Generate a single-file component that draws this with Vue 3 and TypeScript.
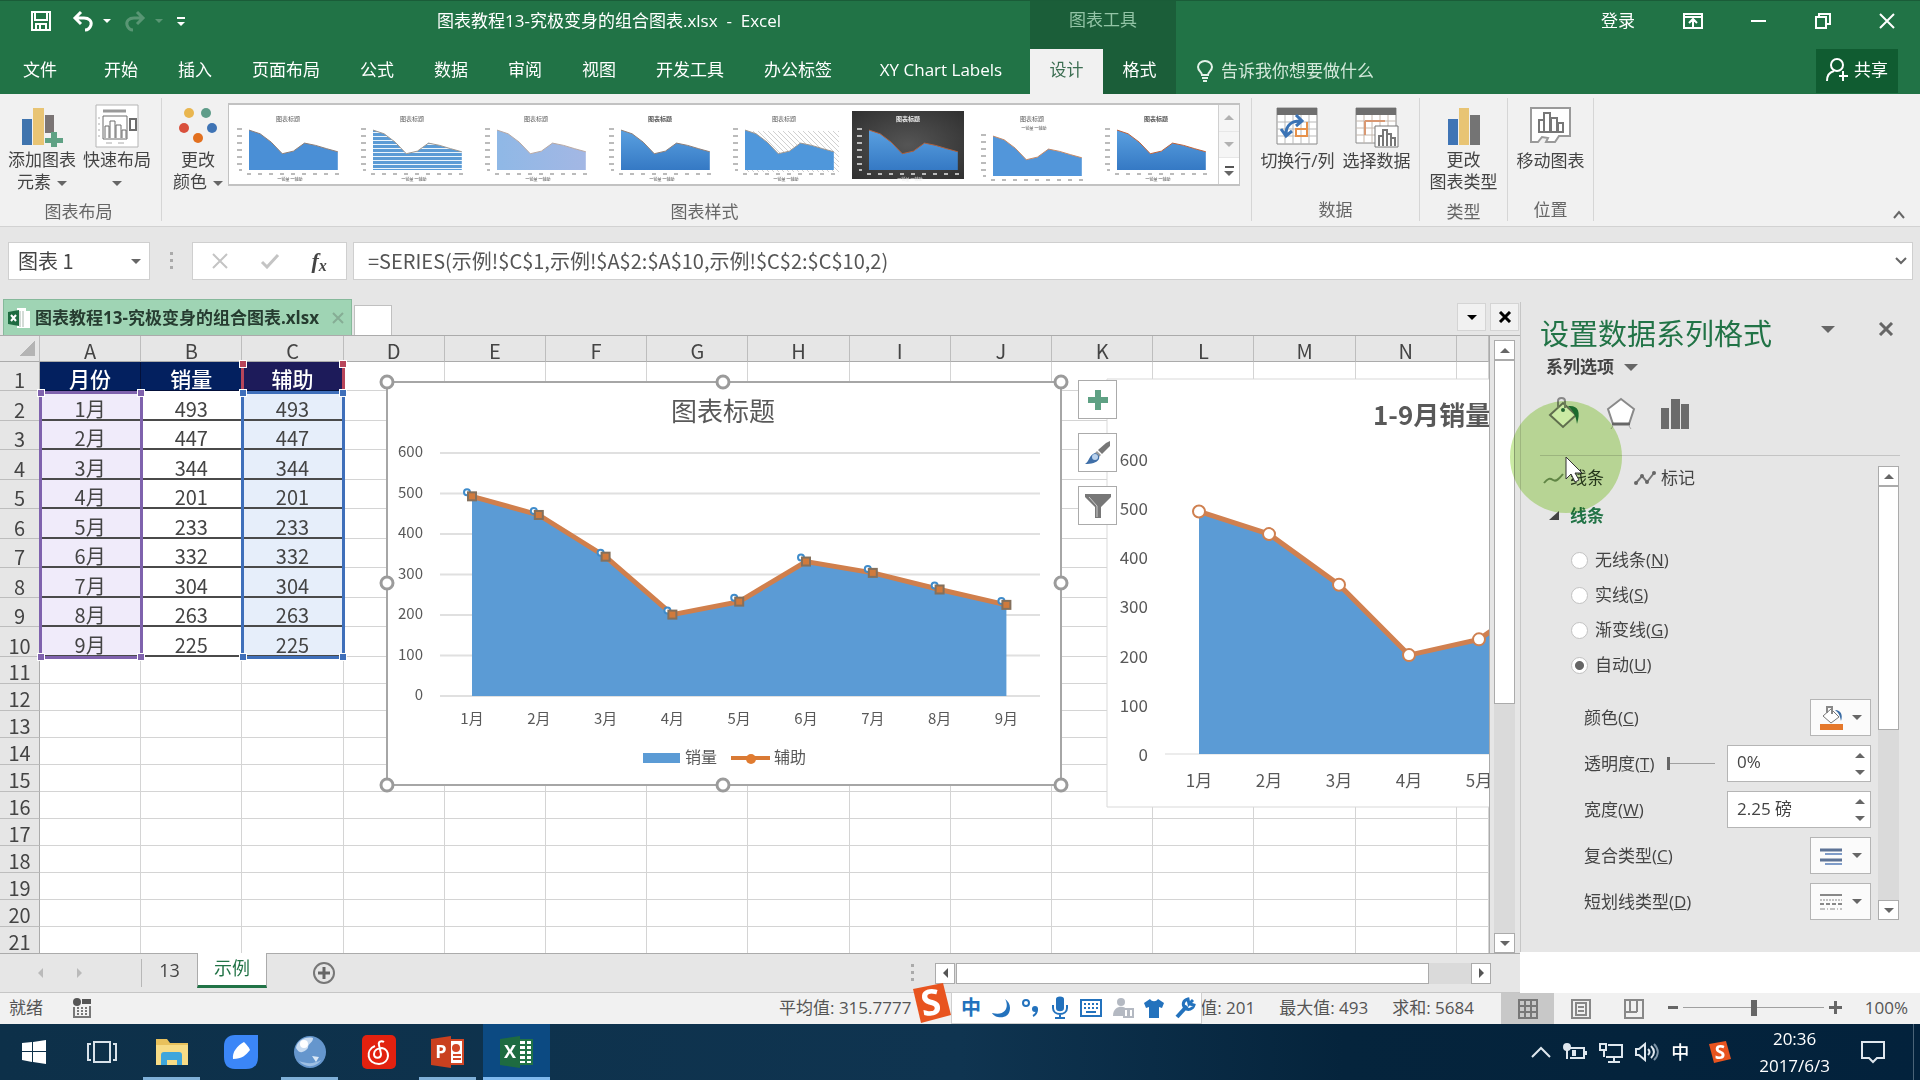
<script setup lang="ts">
import { ref } from 'vue'

interface Row { month: string; value: number }

const rows: Row[] = [
  { month: '1月', value: 493 },
  { month: '2月', value: 447 },
  { month: '3月', value: 344 },
  { month: '4月', value: 201 },
  { month: '5月', value: 233 },
  { month: '6月', value: 332 },
  { month: '7月', value: 304 },
  { month: '8月', value: 263 },
  { month: '9月', value: 225 },
]

const fileName = '图表教程13-究极变身的组合图表.xlsx'
const menuTabs = ['文件', '开始', '插入', '页面布局', '公式', '数据', '审阅', '视图', '开发工具', '办公标签', 'XY Chart Labels']
const columns = 'ABCDEFGHIJKLMN'.split('')
const emptyRows = Array.from({ length: 11 }, (_, i) => i + 11)
const ticks = [600, 500, 400, 300, 200, 100, 0]

const formula = ref('=SERIES(示例!$C$1,示例!$A$2:$A$10,示例!$C$2:$C$10,2)')
const lineKind = ref('U')
const lineKinds = [
  { key: 'N', label: '无线条' },
  { key: 'S', label: '实线' },
  { key: 'G', label: '渐变线' },
  { key: 'U', label: '自动' },
]
const opacity = ref('0%')
const lineWidth = ref('2.25 磅')

function plot(x0: number, step: number, base: number, scale: number) {
  return rows.map((r, i) => ({ x: x0 + step * i, y: base - r.value * scale, label: r.month }))
}
function path(points: { x: number; y: number }[]) {
  return points.map((p) => `${p.x},${p.y}`).join(' ')
}
function area(points: { x: number; y: number }[], base: number) {
  return `${points[0].x},${base} ${path(points)} ${points[points.length - 1].x},${base}`
}

const main = plot(85, 66.8, 314, 0.405)
const side = plot(92, 70, 375, 0.492)
const thumb = plot(17, 11.1, 61, 0.081)

const styles = [
  { fill: '#4a8fd6', bold: false, line: '#8f7f78' },
  { fill: 'url(#stripes)', bold: false, line: '#a09890' },
  { fill: 'url(#pale)', bold: false, line: '#b9a9a4' },
  { fill: 'url(#deep)', bold: true, line: '#8f7f78' },
  { fill: '#4f97db', bold: false, line: '#a09890', hatch: true },
  { fill: 'url(#deep)', bold: true, line: '#b0603c', dark: true },
  { fill: '#5296da', bold: false, line: '#c88a66', top: true },
  { fill: 'url(#deep)', bold: true, line: '#c0623a' },
]
</script>

<template>
  <div class="app">
    <header class="head">
      <div class="titlebar">
        <div class="quick">
          <button class="bare" aria-label="保存">
            <svg width="22" height="22" viewBox="0 0 22 22" fill="none" stroke="#fff" stroke-width="2"><path d="M2 2h18v18H2zM5 2v8h12V2M6 20v-6h10v6M10 15v4" /></svg>
          </button>
          <button class="bare" aria-label="撤消">
            <svg width="22" height="22" viewBox="0 0 22 22" fill="none" stroke="#fff" stroke-width="3"><path d="M9 2L3 8l6 6M3 8h9c5 0 8 3 7 7-1 3-3 5-6 5" /></svg>
            <i class="tri light"></i>
          </button>
          <button class="bare faded" aria-label="恢复">
            <svg width="22" height="22" viewBox="0 0 22 22" fill="none" stroke="#fff" stroke-width="3"><path d="M13 2l6 6-6 6M19 8h-9c-5 0-8 3-7 7 1 3 3 5 6 5" /></svg>
            <i class="tri light"></i>
          </button>
          <button class="bare custom" aria-label="自定义快速访问工具栏"><i class="dash"></i><i class="tri light"></i></button>
        </div>
        <h1>{{ fileName }}&nbsp; -&nbsp; Excel</h1>
        <div class="window">
          <button class="bare">登录</button>
          <button class="bare" aria-label="功能区显示选项">
            <svg width="20" height="16" viewBox="0 0 20 16" fill="none" stroke="#fff" stroke-width="2"><path d="M1 1h18v14H1zM1 4h18M10 14V7M6 10l4-4 4 4" /></svg>
          </button>
          <button class="bare" aria-label="最小化">
            <svg width="16" height="16" viewBox="0 0 16 16"><path d="M0 8h15" stroke="#fff" stroke-width="2" /></svg>
          </button>
          <button class="bare" aria-label="还原">
            <svg width="16" height="16" viewBox="0 0 16 16" fill="none" stroke="#fff" stroke-width="2"><path d="M1 4h10v11H1zM4 4V1h11v10h-4" /></svg>
          </button>
          <button class="bare" aria-label="关闭">
            <svg width="16" height="16" viewBox="0 0 16 16"><path d="M1 1l14 14M15 1L1 15" stroke="#fff" stroke-width="2" /></svg>
          </button>
        </div>
      </div>
      <nav class="tabs">
        <button v-for="t in menuTabs" :key="t" class="tab">{{ t }}</button>
        <div class="context">
          <span class="context-name">图表工具</span>
          <button class="tab active">设计</button>
          <button class="tab">格式</button>
        </div>
        <button class="tell">
          <svg width="16" height="22" viewBox="0 0 16 22" fill="none" stroke="#e4f2e9" stroke-width="2"><path d="M5 15c0-3-4-4-4-8a7 6 0 0 1 14 0c0 4-4 5-4 8zM5 18h6M6 21h4" /></svg>
          告诉我你想要做什么
        </button>
        <button class="share">
          <svg width="22" height="24" viewBox="0 0 22 24" fill="none" stroke="#fff" stroke-width="2"><circle cx="11" cy="7" r="6" /><path d="M1 23c0-6 3-9 7-10M13 18h9M17 13v10" /></svg>
          共享
        </button>
      </nav>
    </header>

    <section class="ribbon">
      <div class="group g-layout">
        <div class="tools">
          <button class="tool">
            <span class="icon"><svg width="42" height="42" viewBox="0 0 42 42"><path fill="#3f74ae" d="M1 14h10v26H1z" /><path fill="#e8c474" d="M12 3h11v37H12z" /><path fill="#7a7474" d="M24 10h9v18h-9z" /><path fill="#5fa184" d="M30 27h6v6h6v5h-6v6h-6v-6h-6v-5h6z" /></svg></span>
            <span>添加图表<br />元素<i class="tri"></i></span>
          </button>
          <button class="tool">
            <span class="icon"><svg width="44" height="44" viewBox="0 0 44 44" fill="none" stroke="#6c6c6c"><path fill="#fff" stroke="#b5b5b5" d="M1 1h42v42H1z" /><path stroke-width="3" stroke="#999" d="M8 7h23" /><path d="M8 12h24v23H8z M10 34V22h4v12M15 34V17h5v17M21 34V21h5v13M27 34v-8h4v8" /><path stroke-width="2" d="M35 15h6v11h-6z" /><path stroke="#aaa" d="M3 14h2M3 20h2M3 26h2M3 32h2M11 39h6M23 39h6" /></svg></span>
            <span>快速布局<br /><i class="tri"></i></span>
          </button>
        </div>
        <p>图表布局</p>
      </div>
      <div class="group g-style">
        <div class="tools">
          <button class="tool colour">
            <span class="icon"><svg width="42" height="42" viewBox="0 0 42 42"><circle cx="12" cy="8" r="5" fill="#e9b64f" /><circle cx="29" cy="8" r="5" fill="#5e9c89" /><circle cx="7" cy="23" r="5" fill="#d9503c" /><circle cx="35" cy="23" r="5" fill="#3f74b5" /><circle cx="21" cy="33" r="5" fill="#e2701f" /></svg></span>
            <span>更改<br />颜色<i class="tri"></i></span>
          </button>
          <div class="gallery">
            <svg width="0" height="0" class="defs">
              <defs>
                <linearGradient id="deep" x2="0" y2="1"><stop stop-color="#5aa0e0" /><stop offset="1" stop-color="#3579c4" /></linearGradient>
                <linearGradient id="pale"><stop stop-color="#8fb8e6" /><stop offset="1" stop-color="#a3b7e4" /></linearGradient>
                <pattern id="stripes" width="4" height="4" patternUnits="userSpaceOnUse"><path fill="#eaf4fc" d="M0 0h4v4H0z" /><path fill="#5b9bd5" d="M0 0h4v3H0z" /></pattern>
                <pattern id="hatch" width="5" height="5" patternUnits="userSpaceOnUse"><path stroke="#d0d0d0" d="M0 0l5 5" /></pattern>
              </defs>
            </svg>
            <div class="thumbs">
              <button v-for="(s, n) in styles" :key="n" class="thumb" :class="{ dark: s.dark }" :aria-label="`样式 ${n + 1}`">
                <svg width="112" height="72" viewBox="0 0 112 72">
                  <path v-if="s.hatch" d="M17 20h94v41H17z" fill="url(#hatch)" />
                  <text x="56" y="10" text-anchor="middle" font-size="6" :font-weight="s.bold ? 700 : 400">图表标题</text>
                  <g :transform="s.top ? 'translate(0 4)' : 'translate(0 -2)'">
                    <polygon :points="area(thumb, 61)" :fill="s.fill" />
                    <polyline :points="path(thumb)" fill="none" :stroke="s.line" />
                    <path d="M5 20h5M5 27h5M5 34h5M5 41h5M5 48h5M5 55h5M7 61h3" class="faint" />
                    <path d="M15 65h93" stroke-dasharray="4 7" class="faint" />
                  </g>
                  <text x="58" :y="s.top ? 19 : 70" text-anchor="middle" font-size="4">━销量 ━辅助</text>
                </svg>
              </button>
            </div>
            <div class="gallery-nav">
              <button aria-label="上一行" disabled><i class="tri up"></i></button>
              <button aria-label="下一行" disabled><i class="tri"></i></button>
              <button aria-label="更多样式" class="more"><i class="dash"></i><i class="tri"></i></button>
            </div>
          </div>
        </div>
        <p>图表样式</p>
      </div>
      <div class="group g-data">
        <div class="tools">
          <button class="tool">
            <span class="icon"><svg width="42" height="40" viewBox="0 0 42 40"><path fill="#fff" stroke="#8a8a8a" d="M1 1h40v36H1z" /><path fill="#6e6e6e" d="M1 1h40v7H1z" /><path stroke="#b9b9b9" d="M1 15h40M1 22h40M1 29h40M9 8v29M17 8v29M25 8v29M33 8v29" /><path fill="none" stroke="#e7914a" stroke-width="2" d="M20 22h11v7H20zM31 15v14" /><path fill="none" stroke="#3b73b5" stroke-width="3" d="M10 27c0-9 6-13 14-13M20 8l6 6-6 5M5 22l5 7 6-5" /></svg></span>
            <span>切换行/列</span>
          </button>
          <button class="tool">
            <span class="icon"><svg width="44" height="42" viewBox="0 0 44 42"><path fill="#fff" stroke="#8a8a8a" d="M1 2h40v35H1z" /><path fill="#6e6e6e" d="M1 2h40v7H1z" /><path stroke="#c4b8ae" d="M1 15h40M1 22h40M1 29h40M9 9v28M17 9v28M25 9v28M33 9v28" /><path fill="none" stroke="#d99872" stroke-width="2" d="M10 15h20M10 15v14" /><path fill="#fff" stroke="#777" d="M20 20h23v21H20z" /><path fill="none" stroke="#777" stroke-width="2" d="M24 40V30h4v10M28 40V24h4v16M32 40V28h4v12M36 40v-8h4v8" /></svg></span>
            <span>选择数据</span>
          </button>
        </div>
        <p>数据</p>
      </div>
      <div class="group g-type">
        <div class="tools">
          <button class="tool">
            <span class="icon"><svg width="34" height="42" viewBox="0 0 34 42"><path fill="#3f74b5" d="M1 14h10v26H1z" /><path fill="#e8c474" d="M12 3h10v37H12z" /><path fill="#747474" d="M23 10h10v30H23z" /></svg></span>
            <span>更改<br />图表类型</span>
          </button>
        </div>
        <p>类型</p>
      </div>
      <div class="group g-place">
        <div class="tools">
          <button class="tool">
            <span class="icon"><svg width="42" height="40" viewBox="0 0 42 40" fill="none" stroke="#777" stroke-width="2"><path fill="#fff" stroke="#9a9a9a" d="M1 1h39v28H29l-4 6h-9l2-4-6-1-4 5H1z" /><path d="M9 25V13h5v12zM14 25V6h6v19zM21 25V11h6v14zM28 25v-9h5v9z" /></svg></span>
            <span>移动图表</span>
          </button>
        </div>
        <p>位置</p>
      </div>
      <button class="collapse" aria-label="折叠功能区">
        <svg width="14" height="10" viewBox="0 0 14 10"><path d="M2 8l5-6 5 6" fill="none" stroke="#666" stroke-width="2" /></svg>
      </button>
    </section>

    <section class="formula">
      <div class="name-box">
        <select aria-label="名称框"><option>图表 1</option></select>
        <i class="tri"></i>
      </div>
      <i class="dots"></i>
      <div class="entry">
        <button aria-label="取消"><svg width="18" height="16" viewBox="0 0 18 16"><path d="M2 1l14 14M16 1L2 15" stroke="#c4c4c4" stroke-width="2" /></svg></button>
        <button aria-label="输入"><svg width="20" height="16" viewBox="0 0 20 16"><path d="M2 9l5 5L18 2" fill="none" stroke="#c4c4c4" stroke-width="3" /></svg></button>
        <button class="fx" aria-label="插入函数">f<small>x</small></button>
      </div>
      <div class="bar">
        <input v-model="formula" aria-label="编辑栏" />
        <svg width="12" height="8" viewBox="0 0 12 8"><path d="M1 1l5 5 5-5" fill="none" stroke="#666" stroke-width="2" /></svg>
      </div>
    </section>

    <div class="workspace">
      <main class="book">
        <div class="docs">
          <div class="doc">
            <svg width="24" height="22" viewBox="0 0 24 22"><path fill="#fff" d="M9 1h9v20H9z" /><path stroke="#a8b8ae" d="M12 4v16M15 4v16" /><path fill="#fff" d="M18 4h4v17h-4z" /><path fill="#1e6b41" d="M0 5l11-2v16L0 17z" /><path d="M3 8l5 6M8 8l-5 6" stroke="#fff" stroke-width="2" /></svg>
            <b>{{ fileName }}</b>
            <button class="bare" aria-label="关闭工作簿"><svg width="12" height="12" viewBox="0 0 12 12"><path d="M1 1l10 10M11 1L1 11" stroke="#86ad95" stroke-width="2" /></svg></button>
          </div>
          <div class="doc-new"></div>
          <div class="doc-tools">
            <button aria-label="窗口列表"><i class="tri black"></i></button>
            <button aria-label="关闭窗口"><svg width="14" height="12" viewBox="0 0 14 12"><path d="M2 1l10 10M12 1L2 11" stroke="#000" stroke-width="3" /></svg></button>
          </div>
        </div>

        <div class="sheet-row">
          <div class="sheet">
            <table>
              <colgroup><col class="c-head" /><col v-for="c in columns" :key="c" /><col class="c-last" /></colgroup>
              <thead>
                <tr><th class="corner"></th><th v-for="c in columns" :key="c">{{ c }}</th><th></th></tr>
              </thead>
              <tbody>
                <tr class="tall names">
                  <th>1</th><td>月份</td><td>销量</td><td>辅助</td><td v-for="n in 12" :key="n"></td>
                </tr>
                <tr v-for="(r, i) in rows" :key="r.month" class="tall data">
                  <th>{{ i + 2 }}</th><td>{{ r.month }}</td><td>{{ r.value }}</td><td>{{ r.value }}</td><td v-for="n in 12" :key="n"></td>
                </tr>
                <tr v-for="n in emptyRows" :key="n">
                  <th>{{ n }}</th><td v-for="m in 15" :key="m"></td>
                </tr>
              </tbody>
            </table>

            <div class="range red"><i></i><i></i></div>
            <div class="range purple"><i></i><i></i><i></i><i></i></div>
            <div class="range blue"><i></i><i></i><i></i><i></i></div>

            <svg class="chart second" width="674" height="429" viewBox="0 0 674 429">
              <path d="M0 0h673v428H0z" fill="#fff" stroke="#d9d9d9" />
              <text x="266" y="46" class="second-title">1-9月销量</text>
              <g class="axis big"><text v-for="t in ticks" :key="t" x="41" :y="382 - t * 0.492" text-anchor="end">{{ t }}</text></g>
              <path d="M58 375h616" stroke="#d9d9d9" />
              <polygon :points="area(side, 375)" fill="#5b9bd5" />
              <polyline :points="path(side)" fill="none" stroke="#d08050" stroke-width="5" />
              <circle v-for="p in side" :key="p.x" :cx="p.x" :cy="p.y" r="6" fill="#fff" stroke="#cf8050" stroke-width="2" />
              <g class="axis big"><text v-for="p in side.slice(0, 5)" :key="p.x" :x="p.x" y="408" text-anchor="middle">{{ p.label }}</text></g>
            </svg>

            <svg class="chart first" width="690" height="420" viewBox="-8 -8 690 420">
              <path d="M0 0h674v403H0z" fill="#fff" stroke="#a6a6a6" stroke-width="2" />
              <text x="336" y="39" text-anchor="middle" class="first-title">图表标题</text>
              <g v-for="t in ticks" :key="t" class="axis">
                <path :d="`M53 ${314 - t * 0.405}h600`" stroke="#e0e0e0" stroke-width="2" />
                <text x="36" :y="318 - t * 0.405" text-anchor="end">{{ t }}</text>
              </g>
              <polygon :points="area(main, 314)" fill="#5b9bd5" />
              <polyline :points="path(main)" fill="none" stroke="#d07f4c" stroke-width="5" />
              <g v-for="p in main" :key="p.x">
                <circle :cx="p.x - 5" :cy="p.y - 4" r="3" fill="#fff" stroke="#3f8ccb" stroke-width="2" />
                <rect :x="p.x - 4" :y="p.y - 4" width="8" height="8" fill="#d07a3c" stroke="#84705c" stroke-width="2" />
              </g>
              <g class="axis"><text v-for="p in main" :key="p.x" :x="p.x" y="342" text-anchor="middle">{{ p.label }}</text></g>
              <path d="M256 371h37v10h-37z" fill="#5b9bd5" />
              <path d="M344 376h39" stroke="#d97a35" stroke-width="4" />
              <circle cx="364" cy="377" r="5" fill="#e07b30" />
              <g class="axis mid"><text x="298" y="381">销量</text><text x="387" y="381">辅助</text></g>
              <g fill="#fff" stroke="#9b9b9b" stroke-width="3">
                <circle v-for="[x, y] in [[0, 0], [336, 0], [674, 0], [0, 201], [674, 201], [0, 403], [336, 403], [674, 403]]" :key="`${x}-${y}`" :cx="x" :cy="y" r="6" />
              </g>
            </svg>

            <div class="chart-tools">
              <button aria-label="图表元素"><svg width="22" height="22" viewBox="0 0 22 22"><path d="M11 1v20M1 11h20" stroke="#5fa184" stroke-width="6" /></svg></button>
              <button aria-label="图表样式"><svg width="28" height="28" viewBox="0 0 28 28"><path fill="#777" d="M26 2v5L18 15l-4-4L22 4z" /><path fill="#9a9a9a" d="M13 12l4 4-2 2-4-4z" /><path fill="#3f6fa8" d="M11 14c3 1 5 3 4 6-2 4-8 5-14 5 4-2 4-9 10-11z" /><circle cx="11" cy="18" r="3" fill="#b9d1ec" /></svg></button>
              <button aria-label="图表筛选器"><svg width="26" height="26" viewBox="0 0 26 26"><path fill="#777" d="M0 1h26v3L16 14v11h-6V14L0 4z" /><path d="M4 4l8 9v11" fill="none" stroke="#ccc" stroke-width="1" /></svg></button>
            </div>
          </div>
          <div class="vscroll">
            <button aria-label="向上滚动"><i class="tri up"></i></button>
            <div class="track"><div class="grip"></div></div>
            <button aria-label="向下滚动"><i class="tri"></i></button>
          </div>
        </div>

        <div class="sheetbar">
          <div class="sheet-nav"><button class="bare" aria-label="上一个工作表"><i class="tri left"></i></button><button class="bare" aria-label="下一个工作表"><i class="tri right"></i></button></div>
          <button class="sheet-tab">13</button>
          <button class="sheet-tab current">示例</button>
          <button class="bare add" aria-label="新工作表"><svg width="24" height="24" viewBox="0 0 24 24"><circle cx="12" cy="12" r="10" fill="none" stroke="#777" stroke-width="2" /><path d="M12 6v12M6 12h12" stroke="#666" stroke-width="3" /></svg></button>
          <i class="dots"></i>
          <div class="hscroll">
            <button aria-label="向左滚动"><i class="tri left"></i></button>
            <div class="grip"></div>
            <button aria-label="向右滚动"><i class="tri right"></i></button>
          </div>
        </div>
      </main>

      <aside class="pane">
        <div class="pane-body">
          <div class="pane-title">
            <h2>设置数据系列格式</h2>
            <button class="bare" aria-label="窗格选项"><i class="tri large"></i></button>
            <button class="bare" aria-label="关闭窗格"><svg width="16" height="14" viewBox="0 0 16 14"><path d="M2 1l12 12M14 1L2 13" stroke="#666" stroke-width="3" /></svg></button>
          </div>
          <button class="bare series">系列选项<i class="tri large"></i></button>
          <div class="kinds">
            <button class="bare" aria-label="填充与线条"><svg width="34" height="34" viewBox="0 0 34 34"><path fill="#fff" stroke="#777" stroke-width="2" d="M2 19L15 7l13 12-13 12z" /><path fill="none" stroke="#888" stroke-width="2" d="M10 12V5c0-4 7-4 7 0v7" /><circle cx="15" cy="14" r="2" fill="#2c6e49" /><path fill="#217346" d="M20 10c10-1 13 5 9 18-1-8-3-12-9-18z" /></svg></button>
            <button class="bare" aria-label="效果"><svg width="30" height="34" viewBox="0 0 30 34"><path fill="#fff" stroke="#8a8a8a" stroke-width="2" d="M15 3l13 10-5 15H7L2 13z" /><path d="M6 28h18" stroke="#666" stroke-width="3" /><path d="M5 33l2-3M25 33l-2-3" stroke="#aaa" /></svg></button>
            <button class="bare" aria-label="系列选项"><svg width="30" height="34" viewBox="0 0 30 34" fill="#6b6b6b"><path d="M1 12h8v21H1zM11 3h9v30h-9zM21 8h8v25h-8z" /></svg></button>
          </div>
          <div class="pane-main">
            <div class="options">
              <div class="switch">
                <button class="bare on"><svg width="22" height="12" viewBox="0 0 22 12"><path d="M1 11c4-5 6-5 9-3s6-1 10-6" fill="none" stroke="#78906a" stroke-width="2" /></svg>线条</button>
                <button class="bare"><svg width="22" height="14" viewBox="0 0 22 14"><path d="M2 12l6-7 5 6 7-9" fill="none" stroke="#777" stroke-width="2" /><g fill="#666"><circle cx="2" cy="12" r="2" /><circle cx="8" cy="5" r="2" /><circle cx="13" cy="11" r="2" /><circle cx="20" cy="2" r="2" /></g></svg>标记</button>
              </div>
              <button class="bare section"><svg width="10" height="10" viewBox="0 0 10 10"><path d="M10 0v9H0z" fill="#444" /></svg>线条</button>
              <div class="radios">
                <label v-for="k in lineKinds" :key="k.key"><input v-model="lineKind" type="radio" name="line" :value="k.key" />{{ k.label }}(<u>{{ k.key }}</u>)</label>
              </div>
              <div class="fields">
                <div class="field"><span>颜色(<u>C</u>)</span><button class="pick" aria-label="颜色"><svg width="26" height="26" viewBox="0 0 26 26"><path fill="#fff" stroke="#777" stroke-width="1" d="M4 11l8-7 8 8-8 6z" /><path fill="none" stroke="#888" stroke-width="2" d="M8 8V2h5v7" /><path fill="#3b6da5" d="M16 5c6 0 8 5 6 11-1-5-2-8-6-11z" /><path fill="#e5782b" d="M1 19h23v6H1z" /></svg><i class="tri"></i></button></div>
                <div class="field"><label for="op">透明度(<u>T</u>)</label><input class="slide" type="range" min="0" max="100" value="0" aria-label="透明度滑块" /><div class="spin"><input id="op" v-model="opacity" /><i class="tri up"></i><i class="tri"></i></div></div>
                <div class="field"><label for="lw">宽度(<u>W</u>)</label><div class="spin"><input id="lw" v-model="lineWidth" /><i class="tri up"></i><i class="tri"></i></div></div>
                <div class="field"><span>复合类型(<u>C</u>)</span><button class="pick" aria-label="复合类型"><svg width="26" height="18" viewBox="0 0 26 18"><path d="M1 3h22M1 13h22" stroke="#5d7396" stroke-width="3" /><path d="M6 7h17M6 17h17" stroke="#7f9cc8" stroke-width="2" /></svg><i class="tri"></i></button></div>
                <div class="field"><span>短划线类型(<u>D</u>)</span><button class="pick" aria-label="短划线类型"><svg width="26" height="18" viewBox="0 0 26 18" stroke="#888"><path d="M1 2h22" stroke-width="2" /><path d="M1 7h22" stroke-dasharray="2 1" /><path d="M1 11h22" stroke-width="2" stroke-dasharray="4 2" /><path d="M1 16h22" stroke-dasharray="5 2 1 2" /></svg><i class="tri"></i></button></div>
              </div>
            </div>
            <div class="vscroll">
              <button aria-label="向上滚动"><i class="tri up"></i></button>
              <div class="track"><div class="grip"></div></div>
              <button aria-label="向下滚动"><i class="tri"></i></button>
            </div>
          </div>
        </div>
        <div class="spot"></div>
        <svg class="pointer" width="18" height="28" viewBox="0 0 18 28"><path d="M1 1v22l5-5 4 8 4-2-4-7h7z" fill="#fff" stroke="#333" stroke-width="1" /></svg>
      </aside>
    </div>

    <footer class="status">
      <span class="ready">就绪</span>
      <svg width="20" height="20" viewBox="0 0 20 20"><circle cx="5" cy="4" r="4" fill="#555" /><path fill="#555" d="M10 1h9v5h-9z" /><path d="M2 9v10h16V8" fill="none" stroke="#777" stroke-width="2" /><path d="M5 10h11M5 13h11M5 16h11" stroke="#777" stroke-width="2" stroke-dasharray="2 2" /></svg>
      <span class="avg">平均值: 315.7777</span>
      <div class="figures"><span>最小值: 201</span><span>最大值: 493</span><span>求和: 5684</span></div>
      <div class="views">
        <button class="on" aria-label="普通"><svg width="20" height="20" viewBox="0 0 20 20" fill="none" stroke="#777" stroke-width="2"><path d="M1 1h18v18H1zM1 7h18M1 13h18M7 1v18M13 1v18" /></svg></button>
        <button aria-label="页面布局"><svg width="20" height="20" viewBox="0 0 20 20" fill="none" stroke="#888" stroke-width="2"><path d="M1 1h18v18H1zM5 4h10v12H5zM7 8h6M7 12h6" /></svg></button>
        <button aria-label="分页预览"><svg width="20" height="20" viewBox="0 0 20 20" fill="none" stroke="#888" stroke-width="2"><path d="M1 1h18v18H1zM6 1v12M13 1v12M1 13h12" /></svg></button>
      </div>
      <div class="zoom"><span class="minus"></span><input type="range" min="0" max="200" value="100" aria-label="缩放" /><span class="plus"></span><span>100%</span></div>
      <div class="ime">
        <svg width="42" height="42" viewBox="0 0 42 42"><path fill="#e8541f" d="M2 7l30-6 8 32-30 8z" /><text x="20" y="33" text-anchor="middle" font-size="36" font-weight="700" fill="#fff" transform="rotate(-8 21 21)">S</text></svg>
        <div class="ime-bar">
          <b>中</b>
          <svg width="20" height="22" viewBox="0 0 20 22"><path fill="#2372bd" d="M14 2c4 6 2 18-13 14 3 6 18 7 18-5 0-4-2-7-5-9z" /></svg>
          <svg width="20" height="20" viewBox="0 0 20 20"><circle cx="5" cy="5" r="3" fill="none" stroke="#2372bd" stroke-width="2" /><circle cx="14" cy="11" r="3" fill="#2372bd" /><path d="M16 11c0 4-2 6-4 7" fill="none" stroke="#2372bd" stroke-width="2" /></svg>
          <svg width="18" height="24" viewBox="0 0 18 24" fill="none" stroke="#2372bd" stroke-width="2"><path fill="#2372bd" d="M6 3c0-2 6-2 6 0v9c0 3-6 3-6 0z" /><path d="M2 9v3c0 8 14 8 14 0V9M9 18v4M4 22h10" /></svg>
          <svg width="22" height="18" viewBox="0 0 22 18" fill="none" stroke="#2372bd" stroke-width="2"><path d="M1 1h20v16H1z" /><path d="M4 5h14M4 9h14" stroke-dasharray="2 2" /><path d="M6 13h10" /></svg>
          <svg width="22" height="22" viewBox="0 0 22 22" fill="#b4b9c2"><circle cx="9" cy="5" r="4" /><path d="M1 19c0-12 13-10 13-7v7z" /><path fill="#fff" stroke="#b4b9c2" stroke-width="2" d="M12 12h4v8h-4zM17 12h4v8h-4z" /></svg>
          <svg width="20" height="20" viewBox="0 0 20 20"><path fill="#2372bd" d="M6 1c2 3 6 3 8 0l6 4-2 5-3-1v11H5V9l-3 1-2-5z" /></svg>
          <svg width="22" height="22" viewBox="0 0 22 22"><path d="M3 20L13 9" stroke="#2372bd" stroke-width="4" /><path d="M19 3l-4 4-1-5c-5 1-6 6-3 9s8 1 9-3l-4-1" fill="none" stroke="#2372bd" stroke-width="3" /></svg>
        </div>
      </div>
    </footer>

    <div class="taskbar">
      <button class="start" aria-label="开始"><svg width="24" height="24" viewBox="0 0 24 24" fill="#fff"><path d="M0 3l10-1v9H0zM11 2l13-2v11H11zM0 12h10v10L0 20zM11 12h13v12l-13-2z" /></svg></button>
      <button class="tasks" aria-label="任务视图"><svg width="30" height="22" viewBox="0 0 30 22" fill="none" stroke="#d8e2ea" stroke-width="2"><path d="M7 1h16v20H7zM4 3H1v16h3M26 3h3v16h-3" /></svg></button>
      <button class="open" aria-label="文件资源管理器"><svg width="34" height="28" viewBox="0 0 34 28"><path fill="#e8c15c" d="M1 1h11l3 4h18v22H1z" /><path fill="#f7dc86" d="M1 7h32v20H1z" /><path fill="#3ea6dc" d="M6 27V17c0-2 1-3 3-3h15c2 0 3 1 3 3v10h-5v-5H12v5z" /></svg></button>
      <button aria-label="便笺"><svg width="36" height="36" viewBox="0 0 36 36"><path fill="#3b86f7" d="M12 1h23v22c0 8-4 12-12 12H12C4 35 1 30 1 23V12C1 5 5 1 12 1z" /><path fill="#fff" d="M10 25c-1-7 4-13 11-17 2 2 5 5 6 8-4 5-8 9-17 9z" /></svg></button>
      <button class="open" aria-label="浏览器"><svg width="34" height="34" viewBox="0 0 34 34"><circle cx="17" cy="17" r="16" fill="#6596cd" /><path fill="#c9dcf1" d="M3 13C4 6 12 1 20 3c0 5-5 5-5 10-4 5-9 6-12 0z" /><circle cx="11" cy="9" r="4" fill="#fff" /><path fill="#dce9f6" d="M19 21l7 1-3 5z" /><path fill="#9fc0e4" d="M6 26c6 7 17 7 22-1-7 4-14 4-22 1z" /></svg></button>
      <button aria-label="网易云音乐"><svg width="34" height="34" viewBox="0 0 34 34"><rect width="34" height="34" rx="5" fill="#e2210f" /><path d="M22 7c-3-2-6 0-5 3l2 9c0 5-7 5-7 0 0-4 4-6 8-6 8 1 9 15-3 16-12 0-14-14-4-18" fill="none" stroke="#fff" stroke-width="2" /></svg></button>
      <button class="open" aria-label="PowerPoint"><svg width="34" height="32" viewBox="0 0 34 32"><path fill="#fff" stroke="#d24726" stroke-width="2" d="M18 4h14v24H18z" /><path stroke="#d24726" stroke-width="2" d="M22 19h8M22 23h8" /><circle cx="25" cy="12" r="4" fill="#d24726" /><path fill="#c9401f" d="M0 3l20-3v32L0 29z" /><text x="10" y="22" text-anchor="middle" font-size="18" font-weight="700" fill="#fff">P</text></svg></button>
      <button class="open current" aria-label="Excel"><svg width="34" height="32" viewBox="0 0 34 32"><path fill="#fff" stroke="#217346" stroke-width="2" d="M18 4h14v24H18z" /><path stroke="#217346" stroke-width="2" d="M20 9h11M20 14h11M20 19h11M20 24h11M26 5v22" /><path fill="#1e6b41" d="M0 3l20-3v32L0 29z" /><text x="10" y="22" text-anchor="middle" font-size="18" font-weight="700" fill="#fff">X</text></svg></button>
      <div class="tray">
        <svg width="20" height="12" viewBox="0 0 20 12"><path d="M1 11l9-9 9 9" fill="none" stroke="#dfe7ee" stroke-width="2" /></svg>
        <svg width="24" height="20" viewBox="0 0 24 20" fill="none" stroke="#dfe7ee" stroke-width="2"><path d="M7 6h14v10H7M23 9v4M4 8v9" /><circle cx="4" cy="5" r="3" fill="#dfe7ee" /><path fill="#dfe7ee" stroke="none" d="M9 8h4v6H9z" /></svg>
        <svg width="24" height="22" viewBox="0 0 24 22" fill="none" stroke="#dfe7ee" stroke-width="2"><path d="M9 4h14v12H7M15 16v4M9 21h12M5 10v6" /><path d="M1 3h6v6H1z" /></svg>
        <svg width="24" height="20" viewBox="0 0 24 20" fill="none" stroke="#dfe7ee" stroke-width="2"><path d="M1 7h3l6-5v16l-6-5H1zM13 7c2 2 2 4 0 6M16 4c4 4 4 8 0 12" /><path stroke="#7d93a6" d="M19 2c5 5 5 11 0 16" /></svg>
        <b>中</b>
        <svg width="24" height="24" viewBox="0 0 24 24"><path fill="#e8541f" d="M1 4l17-3 5 18-17 4z" /><text x="12" y="19" text-anchor="middle" font-size="19" font-weight="700" fill="#fff">S</text></svg>
        <time>20:36<br />2017/6/3</time>
        <svg width="26" height="24" viewBox="0 0 26 24"><path d="M2 2h22v16h-7l-4 4-4-4H2z" fill="none" stroke="#dfe7ee" stroke-width="2" /></svg>
      </div>
    </div>
  </div>
</template>

<style>
body { margin: 0; }
</style>

<style scoped>
* { box-sizing: border-box; }
.app { display: flex; flex-direction: column; min-height: 100vh; overflow: hidden; background: #e6e6e6; color: #444; font: 17px/22px "Open Sans", "Noto Sans CJK SC", sans-serif; }
button, input, select { font: inherit; color: inherit; }
button { display: flex; align-items: center; justify-content: center; margin: 0; padding: 0; border: 0; background: none; white-space: nowrap; }
svg { display: block; flex: none; }
h1, h2, p { margin: 0; font-weight: 400; }
.tri { display: inline-block; flex: none; width: 0; height: 0; border: 5px solid transparent; border-top-color: #666; border-bottom: 0; vertical-align: middle; }
.tri.up { border-top: 0; border-bottom: 5px solid #666; }
.tri.left { border: 5px solid transparent; border-right-color: #555; border-left: 0; }
.tri.right { border: 5px solid transparent; border-left-color: #555; border-right: 0; }
.tri.light { border-top-color: #fff; border-width: 4px 4px 0; }
.tri.black { border-top-color: #000; }
.tri.large { border-width: 7px 7px 0; }
.dots { width: 3px; height: 18px; background: repeating-linear-gradient(#aaa 0 3px, transparent 3px 7px); }

/* title bar and tabs */
.head { background: #217346; color: #fff; border-top: 1px solid #1a5c38; }
.titlebar { display: flex; align-items: center; height: 48px; padding-bottom: 8px; }
.quick { display: flex; gap: 20px; align-items: center; width: 437px; padding-left: 30px; }
.quick button { gap: 9px; }
.quick .faded { opacity: .25; margin-left: -7px; }
.quick .custom { flex-direction: column; gap: 3px; margin-left: -6px; }
.dash { width: 8px; height: 2px; background: #fff; }
h1 { font-size: 17px; line-height: 24px; }
.window { display: flex; align-items: center; gap: 48px; margin-left: auto; padding-right: 25px; }
.tabs { display: flex; height: 45px; }
.tab { padding: 0 20px 3px; }
.tab:first-child { padding-left: 23px; padding-right: 27px; }
.tab:nth-child(11) { min-width: 178px; }
.context { position: relative; display: flex; width: 146px; background: #1b5e39; }
.context .tab { flex: 1; padding: 0 0 3px; }
.context-name { position: absolute; bottom: 100%; left: 0; right: 0; height: 48px; padding-top: 8px; background: #1b5e39; color: #93c4a6; text-align: center; }
.context .tab.active { background: #f1f1f1; color: #3c6e52; }
.tell { gap: 8px; margin-left: 21px; padding-bottom: 1px; color: #d3e8da; }
.share { gap: 6px; width: 82px; height: 44px; margin: 0 22px 0 auto; padding-bottom: 3px; background: #105c31; }

/* ribbon */
.ribbon { display: flex; height: 133px; padding-top: 4px; background: #f1f1f1; border-bottom: 1px solid #d2d2d2; }
.group { display: flex; flex-direction: column; height: 123px; padding-top: 5px; border-right: 1px solid #d6d6d6; }
.group p { margin-top: 8px; color: #666; text-align: center; }
.tools { display: flex; justify-content: center; height: 90px; }
.tool { flex-direction: column; justify-content: flex-start; text-align: center; padding: 0 4px; }
.icon { display: flex; align-items: center; justify-content: center; height: 47px; }
.tool .tri { margin-left: 6px; }
.g-layout { width: 162px; }
.g-layout .tools { justify-content: flex-start; padding-left: 4px; }
.g-layout p { margin-right: 4px; }
.g-layout .tool { padding: 0 3px 0 4px; }
.g-layout .tool + .tool .tri { margin: 0; }
.g-style { flex: 1; }
.g-style .tools { padding: 0 11px 0 6px; }
.g-style p { margin-right: 4px; }
.g-data { width: 168px; }
.g-type { width: 88px; }
.g-place { width: 86px; }
.colour { width: 60px; }
.gallery { display: flex; flex: 1; height: 83px; background: #fff; border: 1px solid #c2c2c2; border-width: 2px 1px; }
.defs { position: absolute; }
.thumbs { display: flex; flex: 1; gap: 12px; padding: 6px 0 0 3px; }
.thumb { width: 112px; height: 68px; align-items: flex-start; fill: #555; }
.thumb.dark { background: radial-gradient(#555, #303030); fill: #eee; }
.thumb .faint { fill: none; stroke: #bbb; stroke-width: 2; }
.gallery-nav { display: flex; flex-direction: column; width: 21px; border-left: 1px solid #d0d0d0; }
.gallery-nav button { flex: 1; flex-direction: column; gap: 3px; }
.gallery-nav button:disabled { background: #ececec; border-bottom: 1px solid #d0d0d0; opacity: .5; }
.gallery-nav .dash { background: #555; width: 9px; }
.collapse { align-self: flex-end; width: 14px; margin: 0 14px 6px 298px; }

/* formula bar */
.formula { display: flex; align-items: center; height: 72px; padding: 0 7px 4px 8px; font-size: 20px; font-family: "Noto Sans CJK SC", sans-serif; }
.name-box, .entry, .bar { display: flex; align-items: center; height: 38px; background: #fff; border: 1px solid #cfcfcf; }
.name-box { position: relative; width: 142px; }
.name-box select { width: 100%; height: 36px; padding: 0 9px; border: 0; background: none; appearance: none; }
.name-box .tri { position: absolute; right: 8px; pointer-events: none; }
.formula .dots { margin: 0 19px 0 20px; }
.entry { width: 155px; padding: 0 2px; }
.entry button { flex: 1; }
.fx { font: italic 700 22px "Liberation Serif", serif; }
.fx small { font-size: 16px; align-self: flex-end; line-height: 16px; }
.bar { flex: 1; margin-left: 6px; padding-right: 5px; }
.bar input { flex: 1; height: 36px; padding: 0 14px 2px; border: 0; background: none; color: #555; }

/* workbook */
.workspace { display: flex; flex: 1; }
.book { display: flex; flex-direction: column; flex: 1; min-width: 0; }
.docs { display: flex; align-items: flex-end; height: 36px; padding-left: 3px; }
.doc { display: flex; align-items: center; gap: 3px; width: 349px; height: 36px; padding: 0 7px 0 4px; background: #9fd4b4; border: 1px solid #86b99b; border-bottom: 0; color: #263c30; white-space: nowrap; }
.doc button { margin-left: auto; }
.doc-new { width: 38px; height: 30px; margin-left: 2px; background: #fff; border: 1px solid #c0c0c0; border-bottom: 0; }
.doc-tools { display: flex; gap: 4px; margin: 0 1px 4px auto; }
.doc-tools button { width: 29px; height: 28px; background: #f1f1f1; border: 1px solid #d4d4d4; }
.sheet-row { display: flex; flex: 1; border-top: 1px solid #ababab; border-bottom: 1px solid #ababab; }
.sheet { position: relative; flex: 1; min-width: 0; overflow: hidden; height: 617px; background: #fff; border-right: 1px solid #ababab; font-family: "Noto Sans CJK SC", sans-serif; }
table { width: 100%; table-layout: fixed; border-collapse: separate; border-spacing: 0; font-size: 20px; line-height: 20px; }
.c-head { width: 40px; }
.c-last { width: 32px; }
th, td { height: 27px; padding: 0; border-right: 1px solid #d4d4d4; border-bottom: 1px solid #d4d4d4; font-weight: 400; text-align: center; vertical-align: bottom; }
th { background: #e6e6e6; }
tbody th { line-height: 22px; border-color: #bdbdbd; border-right-color: #ababab; }
thead th { height: 26px; border-bottom-color: #ababab; border-right-color: #bdbdbd; }
.corner { background: linear-gradient(135deg, transparent 50%, #b4b4b4 50%) 20px 4px / 15px 16px no-repeat #e6e6e6; }
.tall > * { height: 29px; }
.tall th { line-height: 20px; }
.tall:nth-child(even) > * { height: 30px; }
.names td:nth-child(-n+4) { background: #03205f; border-color: #03103a; color: #fff; font-weight: 500; font-size: 21px; line-height: 24px; }
.names td:nth-child(4) { background: #1d1b5a; }
.data td:nth-child(-n+4) { border-bottom: 2px solid #4a4a4a; }
.data td:nth-child(2) { background: #f0ebfa; }
.data td:nth-child(4) { background: #e6eefa; }

.range { position: absolute; pointer-events: none; }
.range i { position: absolute; width: 8px; height: 8px; border: 1px solid #fff; }
.range i:nth-child(1) { left: -5px; top: -5px; }
.range i:nth-child(2) { right: -5px; top: -5px; }
.range i:nth-child(3) { left: -5px; bottom: -5px; }
.range i:nth-child(4) { right: -5px; bottom: -5px; }
.red { left: 241px; top: 27px; width: 104px; height: 28px; border: solid #b8455a; border-width: 0 3px; }
.red i { background: #b8455a; }
.red i:nth-child(1), .red i:nth-child(2) { top: -3px; }
.purple { left: 39px; top: 55px; width: 104px; height: 268px; border: 3px solid #7f62ad; }
.purple i { background: #7f62ad; }
.blue { left: 241px; top: 55px; width: 104px; height: 268px; border: 3px solid #3f6fba; }
.blue i { background: #3f6fba; }

.chart { position: absolute; overflow: visible; fill: #595959; }
.first { left: 379px; top: 38px; }
.second { left: 1107px; top: 43px; }
.first-title { font-size: 26px; }
.second-title { font-size: 26px; font-weight: 700; }
.axis { font-size: 15px; fill: #595959; }
.axis.mid { font-size: 16px; }
.axis.big { font-size: 17px; }
.chart-tools { position: absolute; left: 1078px; top: 44px; display: flex; flex-direction: column; gap: 14px; }
.chart-tools button { width: 39px; height: 39px; background: #fff; border: 1px solid #ababab; }

.vscroll { display: flex; flex-direction: column; width: 21px; }
.sheet-row .vscroll { margin: 4px 5px 0 4px; }
.vscroll button { height: 20px; background: #fff; border: 1px solid #ababab; }
.track { flex: 1; background: #dadada; }
.grip { background: #fff; border: 1px solid #ababab; }
.track .grip { height: 60%; }

.sheetbar { display: flex; align-items: center; height: 39px; border-bottom: 1px solid #c6c6c6; }
.sheet-nav { display: flex; gap: 34px; width: 142px; height: 28px; padding-left: 38px; border-right: 1px solid #999; opacity: .6; }
.sheet-nav .tri { opacity: .5; }
.sheet-tab { align-self: stretch; width: 55px; padding-bottom: 6px; font-size: 18px; }
.sheet-tab.current { width: 70px; height: 35px; align-self: flex-start; padding: 0 0 2px; background: #fff; border: 1px solid #ababab; border-width: 0 1px 3px; border-bottom-color: #217346; color: #217346; margin: -1px 0 0; }
.add { margin-left: 45px; }
.sheetbar > .dots { margin-left: auto; }
.hscroll { display: flex; width: 556px; height: 21px; margin: 0 29px 0 21px; background: #dadada; }
.hscroll button { width: 20px; background: #fff; border: 1px solid #ababab; }
.hscroll .grip { flex: 1; margin: 0 42px 0 1px; }

/* task pane */
.pane { position: relative; display: flex; flex-direction: column; width: 400px; padding-bottom: 41px; background: linear-gradient(#fff, #fff) bottom / 100% 41px no-repeat; }
.pane-body { display: flex; flex: 1; flex-direction: column; padding: 12px 20px 26px 19px; border-left: 1px solid #c6c6c6; margin-top: 3px; }
.pane-title { display: flex; align-items: center; height: 40px; margin-bottom: 2px; }
h2 { font-size: 29px; line-height: 40px; color: #217346; margin-right: auto; white-space: nowrap; }
.pane-title button { margin: -10px 6px 0 43px; }
.pane-title button:first-of-type { margin-right: 0; margin-left: 0; }
.series { align-self: flex-start; gap: 10px; margin-left: 6px; font-weight: 600; }
.kinds { display: flex; gap: 24px; align-items: flex-end; height: 78px; padding: 0 0 25px 8px; border-bottom: 1px solid #c4c4c4; }
.pane-main { display: flex; flex: 1; padding-top: 10px; }
.options { flex: 1; margin-right: 7px; }
.switch { display: flex; gap: 30px; padding: 1px 0 0 3px; }
.switch button { gap: 5px; }
.switch .on { color: #2e3a28; }
.section { gap: 11px; margin: 16px 0 0 9px; color: #217346; font-weight: 600; }
.radios { display: flex; flex-direction: column; gap: 13px; margin: 22px 0 0 31px; }
.radios label { display: flex; align-items: center; }
input[type="radio"] { appearance: none; width: 17px; height: 17px; margin: 0 7px 0 0; border: 1px solid #c2c2c2; border-radius: 50%; background: #fff; }
input[type="radio"]:checked { background: radial-gradient(#666 0 4px, #fff 5px); }
.fields { display: flex; flex-direction: column; gap: 9px; margin-top: 23px; padding-left: 44px; }
.field { display: flex; align-items: center; justify-content: space-between; height: 37px; }
.field label { flex: none; }
.pick { gap: 7px; width: 61px; height: 37px; background: #fbfbfb; border: 1px solid #b5b5b5; }
.spin { position: relative; width: 144px; height: 37px; }
.spin input { width: 100%; height: 37px; padding: 0 9px 4px; background: #fff; border: 1px solid #b5b5b5; border-radius: 0; }
.spin .tri { position: absolute; right: 6px; bottom: 7px; }
.spin .tri.up { top: 8px; bottom: auto; }
input[type="range"] { appearance: none; margin: 0; background: linear-gradient(#a0a0a0, #a0a0a0) center / 100% 1px no-repeat; }
input[type="range"]::-webkit-slider-thumb { appearance: none; width: 3px; height: 13px; background: #666; }
.slide { width: 48px; }
.pane .vscroll { height: 454px; margin-right: 1px; }
.pane .vscroll .track .grip { height: 59%; }
.spot { position: absolute; left: -10px; top: 102px; width: 112px; height: 112px; border-radius: 50%; background: #cbebA4; mix-blend-mode: multiply; pointer-events: none; }
.pointer { position: absolute; left: 45px; top: 157px; }

/* status bar */
.status { position: relative; display: flex; align-items: center; height: 31px; padding-bottom: 2px; background: #f1f1f1; color: #555; }
.ready { margin: 0 29px 0 9px; }
.avg { margin-left: 687px; }
.figures { display: flex; gap: 24px; margin: 0 27px 0 auto; white-space: nowrap; }
.views { display: flex; height: 31px; margin-bottom: -2px; }
.views button { width: 53px; }
.views .on { background: #c8c8c8; }
.zoom { display: flex; align-items: center; width: 260px; padding: 0 12px 0 8px; }
.minus { width: 10px; height: 3px; margin: 0 5px 0 0; background: #666; }
.plus { width: 13px; height: 13px; margin: 0 auto 0 5px; background: linear-gradient(#666, #666) center / 13px 3px no-repeat, linear-gradient(#666, #666) center / 3px 13px no-repeat; }
.zoom input { width: 141px; }
.zoom input::-webkit-slider-thumb { width: 6px; height: 16px; }
.ime { position: absolute; left: 911px; bottom: 0; display: flex; align-items: flex-end; }
.ime svg { position: relative; }
.ime-bar { display: flex; align-items: center; justify-content: space-between; width: 251px; height: 32px; margin-left: -2px; padding: 0 5px 0 9px; background: #fff; border: 1px solid #cfcfcf; color: #2372bd; }
.ime-bar b { font-size: 20px; }

/* taskbar */
.taskbar { display: flex; height: 56px; background: linear-gradient(90deg, #0d3049, #0f3450 50%, #05243c 70%, #03223c); color: #fff; }
.taskbar button { width: 67px; margin-right: 2px; padding-top: 2px; border-bottom: 3px solid transparent; }
.taskbar .start { margin: 0; }
.taskbar .tasks { width: 69px; }
.taskbar .open { background: linear-gradient(#7fb0d8, #7fb0d8) bottom / 57px 3px no-repeat border-box; }
.taskbar .current { background: linear-gradient(#7fb9ee, #7fb9ee) bottom / 100% 3px no-repeat border-box, #0c4a82; }
.tray { display: flex; align-items: center; gap: 12px; margin-left: auto; padding-right: 27px; border-right: 1px solid #4a6377; margin-right: 6px; }
.tray b { font-size: 18px; font-weight: 500; margin-right: 7px; }
.tray time { line-height: 27px; text-align: center; margin: 0 18px 0 15px; }
</style>
